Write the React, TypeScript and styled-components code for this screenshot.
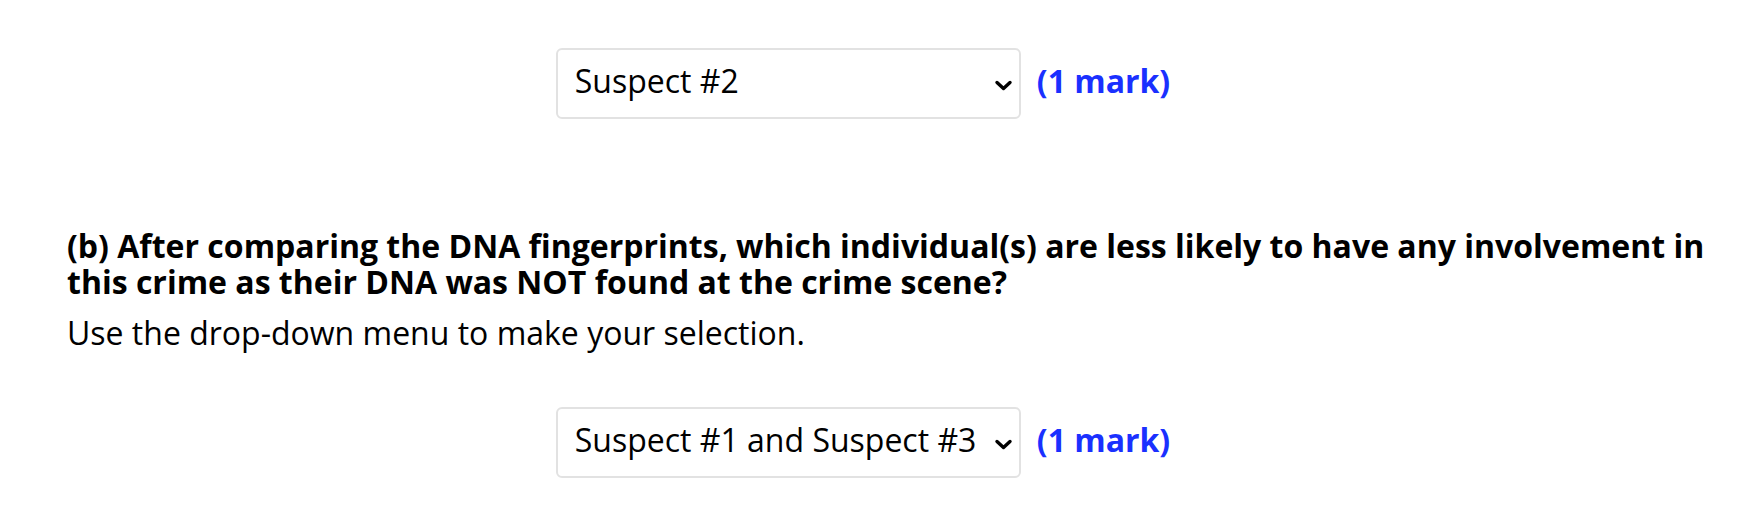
import React from 'react';
import styled, { createGlobalStyle } from 'styled-components';

const GlobalStyle = createGlobalStyle`
  html, body {
    margin: 0;
    padding: 0;
    background: #ffffff;
  }
  body {
    font-family: "Open Sans", "DejaVu Sans", sans-serif;
    color: #000000;
  }
`;

const Page = styled.div`
  width: 1760px;
  height: 520px;
  box-sizing: border-box;
  padding: 48px 33px 0 67px;
  display: flex;
  flex-direction: column;
`;

const AnswerRow = styled.div<{ $spaceAfter?: number }>`
  display: flex;
  justify-content: center;
  align-items: center;
  gap: 16px;
  padding-right: 68px;
  margin-bottom: ${({ $spaceAfter }) => $spaceAfter ?? 0}px;
`;

const SelectWrap = styled.div`
  position: relative;
  width: 465px;
  height: 71px;
  flex-shrink: 0;
`;

const Select = styled.select`
  appearance: none;
  -webkit-appearance: none;
  width: 100%;
  height: 100%;
  box-sizing: border-box;
  border: 2px solid #e2e2e2;
  border-radius: 6px;
  background: #ffffff;
  padding: 0 40px 6px 17px;
  font-family: "Open Sans", sans-serif;
  font-size: 32px;
  color: #000000;
  outline: none;
`;

const Chevron = styled.svg`
  position: absolute;
  right: 8px;
  top: 50%;
  width: 19px;
  height: 11px;
  margin-top: -4px;
  pointer-events: none;
`;

const Marks = styled.span`
  font-weight: 700;
  font-size: 32px;
  color: #1a30ff;
  white-space: nowrap;
  margin-bottom: 6px;
`;

const Question = styled.h3`
  margin: 0 0 15px;
  font-size: 32px;
  line-height: 36px;
  font-weight: 700;
`;

const Hint = styled.p`
  margin: 0 0 56px;
  font-size: 32px;
  line-height: 36px;
`;

interface DropdownProps {
  value: string;
  options: string[];
}

const Dropdown: React.FC<DropdownProps> = ({ value, options }) => (
  <SelectWrap>
    <Select defaultValue={value}>
      {options.map(o => (
        <option key={o} value={o}>{o}</option>
      ))}
    </Select>
    <Chevron viewBox="0 0 19 11">
      <path d="M3 2.5 L9.5 8.5 L16 2.5" fill="none" stroke="#000" strokeWidth="3.4" strokeLinecap="round" strokeLinejoin="round" />
    </Chevron>
  </SelectWrap>
);

const options = [
  'Suspect #1',
  'Suspect #2',
  'Suspect #3',
  'Suspect #1 and Suspect #2',
  'Suspect #1 and Suspect #3',
  'Suspect #2 and Suspect #3',
];

const App: React.FC = () => (
  <>
    <GlobalStyle />
    <Page>
      <AnswerRow $spaceAfter={109}>
        <Dropdown value="Suspect #2" options={options} />
        <Marks>(1 mark)</Marks>
      </AnswerRow>
      <Question>
        (b) After comparing the DNA fingerprints, which individual(s) are less likely to have any involvement in
        this crime as their DNA was NOT found at the crime scene?
      </Question>
      <Hint>Use the drop-down menu to make your selection.</Hint>
      <AnswerRow>
        <Dropdown value="Suspect #1 and Suspect #3" options={options} />
        <Marks>(1 mark)</Marks>
      </AnswerRow>
    </Page>
  </>
);

export default App;
